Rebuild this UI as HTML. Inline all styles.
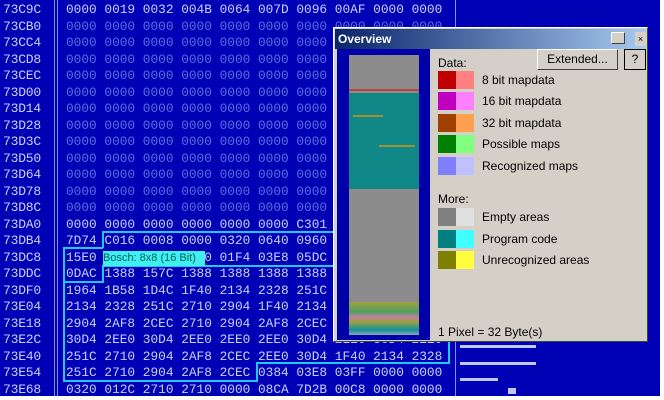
<!DOCTYPE html>
<html><head><style>
body{margin:0;width:664px;height:400px;background:#fff;position:relative;overflow:hidden;font-family:"Liberation Mono",monospace}
#bg{position:absolute;left:0;top:0;width:660px;height:396px;background:#0000b4}
.addr{position:absolute;left:3px;font-size:13px;color:#c8d0ff;letter-spacing:-0.2px}
.row{position:absolute;left:66px;font-size:12.8px;white-space:pre}
.d{color:#5c6ce0}.b{color:#c8d0ff}
.vl{position:absolute;top:0;height:396px;width:1px;background:#8090e8}
.win{position:absolute;left:333px;top:27px;width:315px;height:315px;background:#d4d0c8;border:1px solid #fff;border-right-color:#404040;border-bottom-color:#404040;box-sizing:border-box;font-family:"Liberation Sans",sans-serif;font-size:12px;color:#000}
.tb{position:absolute;left:1px;top:1px;right:1px;height:20px;background:linear-gradient(90deg,#0a246a,#a6caf0);color:#fff;font-weight:bold;font-size:12px;line-height:20px;padding-left:3px}
.sw{position:absolute;left:104px;width:36px;height:18px}
.sw i{display:block;float:left;width:18px;height:18px}
.lbl{position:absolute;left:148px}
</style></head><body>
<div id="bg"></div>
<div class="vl" style="left:54px"></div><div class="vl" style="left:57px"></div>
<div class="vl" style="left:455px"></div>
<div id="rows"></div>
<script>
var A=["73C9C","73CB0","73CC4","73CD8","73CEC","73D00","73D14","73D28","73D3C","73D50","73D64","73D78","73D8C","73DA0","73DB4","73DC8","73DDC","73DF0","73E04","73E18","73E2C","73E40","73E54","73E68"];
var R={0:"0000 0019 0032 004B 0064 007D 0096 00AF 0000 0000",13:"0000 0000 0000 0000 0000 0000 C301 0000 0000 0000",14:"7D74 C016 0008 0000 0320 0640 0960 0000 0000 0000",15:"15E0 07D0 0000 07D0 01F4 03E8 05DC 0000 0000 0000",16:"0DAC 1388 157C 1388 1388 1388 1388 0000 0000 0000",17:"1964 1B58 1D4C 1F40 2134 2328 251C 0000 0000 0000",18:"2134 2328 251C 2710 2904 1F40 2134 0000 0000 0000",19:"2904 2AF8 2CEC 2710 2904 2AF8 2CEC 0000 0000 0000",20:"30D4 2EE0 30D4 2EE0 2EE0 2EE0 30D4 2EE0 30D4 2EE0",21:"251C 2710 2904 2AF8 2CEC 2EE0 30D4 1F40 2134 2328",22:"251C 2710 2904 2AF8 2CEC 0384 03E8 03FF 0000 0000",23:"0320 012C 2710 2710 0000 08CA 7D2B 00C8 0000 0000"};
var h="";for(var i=0;i<24;i++){var t=2+i*16.5;h+='<div class="addr" style="top:'+t+'px">'+A[i]+'</div>';var r=R[i];h+='<div class="row '+(r?'b':'d')+'" style="top:'+t+'px">'+(r||"0000 0000 0000 0000 0000 0000 0000 0000 0000 0000")+'</div>';}
document.getElementById("rows").innerHTML=h;
</script>
<svg style="position:absolute;left:0;top:0" width="664" height="400">
<polyline points="103,248 64,248 64,381 257,381 257,363 449,363 449,232 103,232 103,248" fill="none" stroke="#20c8ff" stroke-width="2"/>
<polyline points="64,282 103,282 103,266 340,266" fill="none" stroke="#20c8ff" stroke-width="2"/>
<g fill="#c0c8ff"><rect x="460" y="345" width="76" height="3"/><rect x="460" y="362" width="76" height="3"/><rect x="460" y="378" width="38" height="3"/><rect x="508" y="388" width="8" height="6"/></g>
</svg>
<div style="position:absolute;left:103px;top:251px;width:102px;height:15px;background:#40f0f0;font-family:'Liberation Sans',sans-serif;font-size:11px;color:#006060;line-height:15px">Bosch: 8x8 (16 Bit)</div>
<div class="win">
<div class="tb">Overview<span style="position:absolute;left:276px;top:3px;width:14px;height:12px;background:#d4d0c8;border:1px solid #fff;border-right-color:#404040;border-bottom-color:#404040;box-sizing:border-box"></span><span style="position:absolute;left:300px;top:3px;width:11px;height:14px;background:#d4d0c8;color:#000;font-size:9px;line-height:14px;text-align:center;font-weight:normal">×</span></div>
<div style="position:absolute;left:3px;top:21px;width:93px;height:291px;background:#0000a8">
 <div style="position:absolute;left:12px;top:6px;width:70px;height:280px;background:#8c8c8c">
  <div style="position:absolute;left:0;top:34px;width:70px;height:2px;background:#c04040"></div>
  <div style="position:absolute;left:0;top:38px;width:70px;height:96px;background:#108888"></div>
  <div style="position:absolute;left:4px;top:60px;width:30px;height:2px;background:#a09030"></div>
  <div style="position:absolute;left:30px;top:90px;width:36px;height:2px;background:#a09030"></div>
  <div style="position:absolute;left:0;top:247px;width:70px;height:33px;background:linear-gradient(180deg,#a0a040,#50a060 30%,#c080a0 45%,#a0a040 60%,#1090a0 85%,#90a8b0)"></div>
 </div>
</div>
<div style="position:absolute;left:203px;top:21px;width:81px;height:21px;border:1px solid #fff;border-right-color:#404040;border-bottom-color:#404040;box-sizing:border-box;text-align:center;line-height:19px">Extended...</div>
<div style="position:absolute;left:290px;top:21px;width:22px;height:21px;border:1px solid #000;box-sizing:border-box;text-align:center;line-height:19px">?</div>
<div style="position:absolute;left:104px;top:28px">Data:</div>
<div class="sw" style="top:43px"><i style="background:#c00000"></i><i style="background:#ff8080"></i></div><div class="lbl" style="top:45px">8 bit mapdata</div>
<div class="sw" style="top:64px"><i style="background:#c000c0"></i><i style="background:#ff80ff"></i></div><div class="lbl" style="top:66px">16 bit mapdata</div>
<div class="sw" style="top:86px"><i style="background:#a04000"></i><i style="background:#ffa050"></i></div><div class="lbl" style="top:88px">32 bit mapdata</div>
<div class="sw" style="top:107px"><i style="background:#008000"></i><i style="background:#80ff80"></i></div><div class="lbl" style="top:109px">Possible maps</div>
<div class="sw" style="top:129px"><i style="background:#8080ff"></i><i style="background:#c0c0ff"></i></div><div class="lbl" style="top:131px">Recognized maps</div>
<div style="position:absolute;left:104px;top:164px">More:</div>
<div class="sw" style="top:180px"><i style="background:#808080"></i><i style="background:#e0e0e0"></i></div><div class="lbl" style="top:182px">Empty areas</div>
<div class="sw" style="top:202px"><i style="background:#008080"></i><i style="background:#40ffff"></i></div><div class="lbl" style="top:204px">Program code</div>
<div class="sw" style="top:223px"><i style="background:#808000"></i><i style="background:#ffff40"></i></div><div class="lbl" style="top:225px">Unrecognized areas</div>
<div style="position:absolute;left:104px;top:297px">1 Pixel = 32 Byte(s)</div>
</div>
</body></html>
